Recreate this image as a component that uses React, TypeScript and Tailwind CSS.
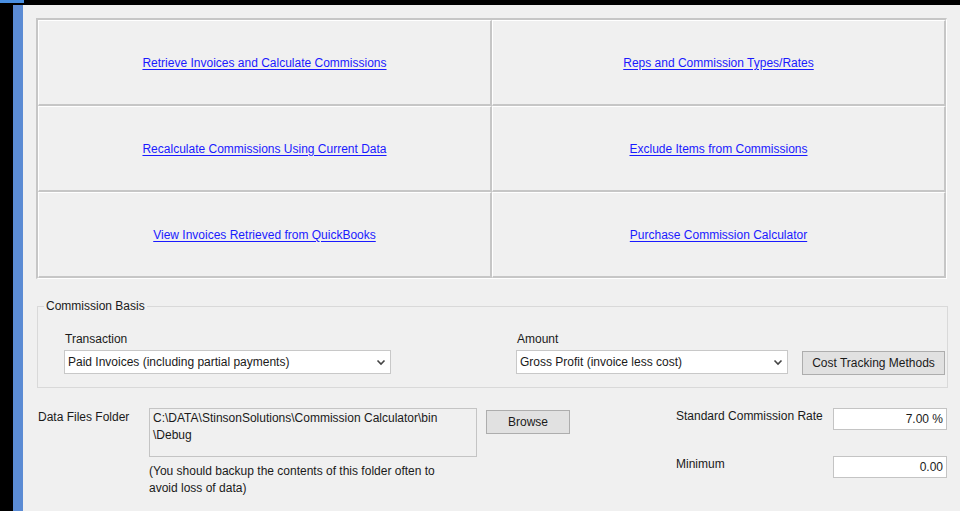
import React from "react";

const font = { fontFamily: '"Liberation Sans", Arial, sans-serif' };

function Chevron() {
  return (
    <svg width="10" height="7" viewBox="0 0 10 7" className="shrink-0">
      <path d="M1.5 1.5 L5 5 L8.5 1.5" fill="none" stroke="#444" strokeWidth="1.6" />
    </svg>
  );
}

function Cell({ text }: { text: string }) {
  return (
    <div className="h-[86px] flex items-center justify-center border-t border-l border-t-white border-l-white border-r-2 border-b-2 border-r-[#c6c6c6] border-b-[#c6c6c6]">
      <a href="#" className="text-[12px] leading-[14px] text-[#1a1aff] underline underline-offset-2">
        {text}
      </a>
    </div>
  );
}

export default function App() {
  const links = [
    "Retrieve Invoices and Calculate Commissions",
    "Reps and Commission Types/Rates",
    "Recalculate Commissions Using Current Data",
    "Exclude Items from Commissions",
    "View Invoices Retrieved from QuickBooks",
    "Purchase Commission Calculator",
  ];
  return (
    <div className="w-[960px] h-[511px] flex flex-col bg-black overflow-hidden text-[#1a1a1a]" style={font}>
      <div className="h-[5px] shrink-0 flex">
        <div className="w-[24px] h-[3px] bg-[#4a90e2]" />
      </div>
      <div className="flex flex-1 min-h-0">
        <div className="w-[13px] shrink-0 bg-black" />
        <div className="w-[10px] shrink-0 bg-[#5b8bd4]" />
        <div className="flex-1 min-w-0 bg-[#f0f0f0] pl-[13px] pt-[13px] flex flex-col">
          {/* link table */}
          <div className="w-[911px] shrink-0 border-t-2 border-l-2 border-t-[#c6c6c6] border-l-[#c6c6c6] border-r border-b border-r-white border-b-white grid grid-cols-2">
            {links.map((l) => (
              <Cell key={l} text={l} />
            ))}
          </div>

          {/* Commission Basis group */}
          <fieldset className="w-[911px] min-w-0 shrink-0 ml-[1px] mt-[20px] h-[89px] border border-[#d9d9d9] pl-[26px] pr-0">
            <legend className="ml-[-20px] px-[2px] text-[12px] leading-[14px]">Commission Basis</legend>
            <div className="flex items-end mt-[19px]">
              <div className="flex flex-col">
                <span className="text-[12px] leading-[14px] pl-[1px] mb-[4px]">Transaction</span>
                <div className="w-[327px] h-[24px] bg-white border border-[#c8c8c8] flex items-center justify-between pl-[3px] pr-[4px]">
                  <span className="text-[12px]">Paid Invoices (including partial payments)</span>
                  <Chevron />
                </div>
              </div>
              <div className="flex flex-col ml-[125px]">
                <span className="text-[12px] leading-[14px] pl-[1px] mb-[4px]">Amount</span>
                <div className="w-[272px] h-[24px] bg-white border border-[#c8c8c8] flex items-center justify-between pl-[3px] pr-[4px]">
                  <span className="text-[12px]">Gross Profit (invoice less cost)</span>
                  <Chevron />
                </div>
              </div>
              <button className="ml-[14px] mb-[-1px] w-[143px] h-[24px] bg-[#e1e1e1] border border-[#adadad] text-[12px] flex items-center justify-center">
                Cost Tracking Methods
              </button>
            </div>
          </fieldset>

          {/* Lower section */}
          <div className="flex mt-[20px] w-[911px]">
            <span className="w-[113px] pl-[2px] pt-[2px] text-[12px] leading-[14px]">Data Files Folder</span>
            <div className="flex flex-col">
              <div className="w-[328px] h-[49px] border border-[#c4c4c4] bg-[#f0f0f0] px-[3px] pt-[1px] text-[12px] leading-[17px]">
                C:\DATA\StinsonSolutions\Commission Calculator\bin
                <br />
                \Debug
              </div>
              <div className="mt-[6px] text-[12px] leading-[17px]">
                (You should backup the contents of this folder often to
                <br />
                avoid loss of data)
              </div>
            </div>
            <button className="ml-[9px] mt-[2px] w-[84px] h-[24px] bg-[#e1e1e1] border border-[#adadad] text-[12px] flex items-center justify-center">
              Browse
            </button>
            <div className="ml-[106px] flex flex-col gap-[26px]">
              <div className="flex items-start">
                <span className="w-[157px] pt-[1px] text-[12px] leading-[14px]">Standard Commission Rate</span>
                <div className="w-[114px] h-[22px] bg-white border border-[#c4c4c4] flex items-center justify-end pr-[3px] text-[12px]">
                  7.00 %
                </div>
              </div>
              <div className="flex items-start">
                <span className="w-[157px] pt-[1px] text-[12px] leading-[14px]">Minimum</span>
                <div className="w-[114px] h-[22px] bg-white border border-[#c4c4c4] flex items-center justify-end pr-[3px] text-[12px]">
                  0.00
                </div>
              </div>
            </div>
          </div>
        </div>
      </div>
    </div>
  );
}
